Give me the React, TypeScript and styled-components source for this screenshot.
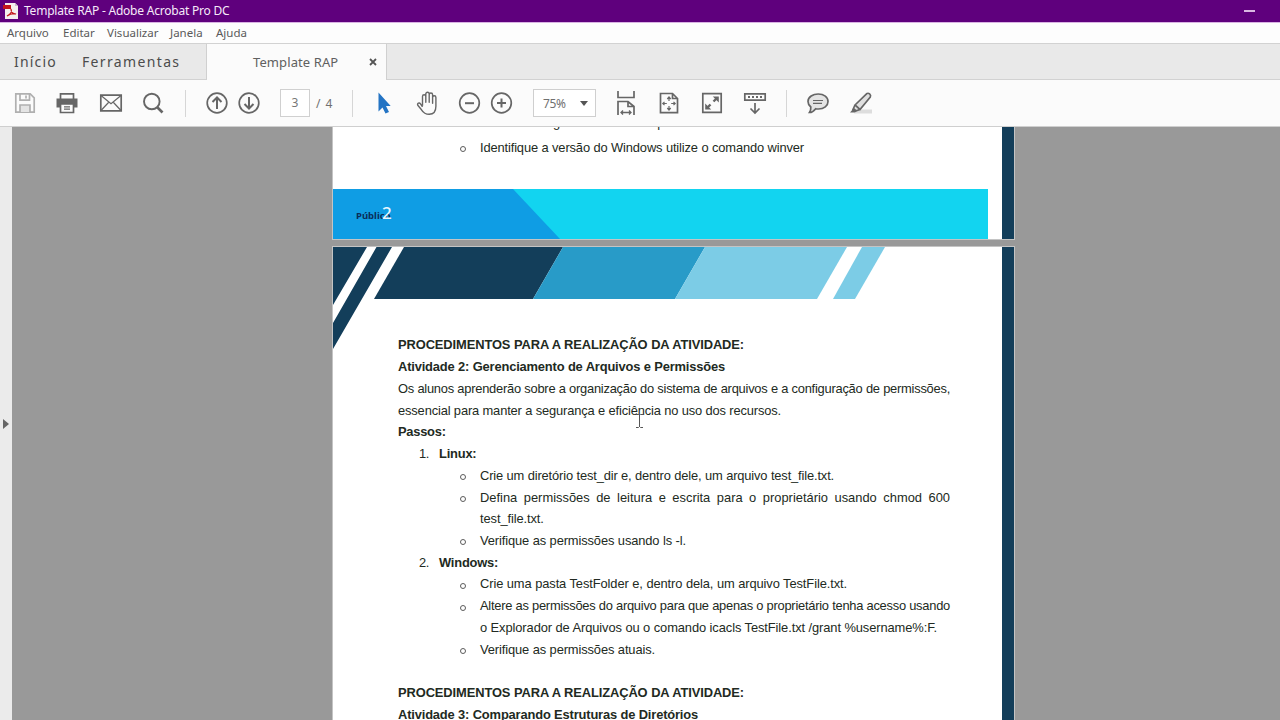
import React from 'react';
import styled, { createGlobalStyle } from 'styled-components';

const Global = createGlobalStyle`
  * { box-sizing: border-box; }
  body { margin: 0; overflow: hidden; background: #999; }
`;

const Window = styled.div`
  width: 1280px;
  height: 720px;
  display: flex;
  flex-direction: column;
  overflow: hidden;
  font-family: 'Noto Sans', 'Open Sans', sans-serif;
  color: #5a5a5a;
`;

const TitleBar = styled.header`
  height: 23px;
  flex: none;
  display: flex;
  align-items: center;
  padding: 0 25px 0 3px;
  background: #5f007d;
  border-bottom: 1px solid #d9b3e3;
  color: #f6eaf9;
`;

const Title = styled.span`
  margin-left: 4px;
  flex: 1;
  font-size: 12px;
  line-height: 20px;
  letter-spacing: -0.22px;
`;

const Minimize = styled.span`
  width: 11px;
  height: 2px;
  margin-bottom: 1px;
  background: #d9b8e2;
`;

const MenuBar = styled.nav`
  height: 20px;
  flex: none;
  display: flex;
  padding-left: 7px;
  background: #fdfdfd;
`;

const MenuItem = styled.span<{ $w: number }>`
  width: ${p => p.$w}px;
  font-size: 11.5px;
  line-height: 20px;
  white-space: nowrap;
`;

const TabBar = styled.div`
  height: 37px;
  flex: none;
  display: flex;
  background: #e9e9e9;
  border-top: 1px solid #d2d2d2;
`;

const HomeTabs = styled.div`
  width: 207px;
  display: flex;
  padding-left: 14px;
  border-right: 1px solid #d0d0d0;
  border-bottom: 1px solid #d2d2d2;
`;

const HomeTab = styled.span<{ $w: number; $ls: number }>`
  width: ${p => p.$w}px;
  font-size: 14px;
  line-height: 35px;
  letter-spacing: ${p => p.$ls}px;
  color: #4c4c4c;
`;

const ActiveTab = styled.div`
  width: 179px;
  display: flex;
  align-items: center;
  justify-content: space-between;
  padding: 0 8px 0 46px;
  background: #fbfbfb;
  font-size: 13px;
  letter-spacing: 0.1px;
  color: #606060;
`;

const TabRest = styled.div`
  flex: 1;
  border-left: 1px solid #d0d0d0;
  border-bottom: 1px solid #d2d2d2;
`;

const ToolBar = styled.div`
  height: 47px;
  flex: none;
  display: flex;
  align-items: center;
  background: #fbfbfb;
  border-bottom: 1px solid #cfcfcf;
  padding-left: 13px;
`;

const Tool = styled.span<{ $gap: number }>`
  width: 24px;
  height: 24px;
  flex: none;
  margin-right: ${p => p.$gap}px;
  svg { display: block; overflow: visible; }
`;

const Divider = styled.span<{ $gap: number }>`
  width: 1px;
  height: 27px;
  margin-right: ${p => p.$gap}px;
  background: #d6d6d6;
`;

const PageInput = styled.span`
  width: 30px;
  height: 28px;
  border: 1px solid #d0d0d0;
  background: #fff;
  text-align: center;
  font-size: 12px;
  line-height: 26px;
  color: #777;
`;

const PageTotal = styled.span`
  width: 42px;
  padding-left: 6px;
  font-size: 12px;
  word-spacing: 2px;
  white-space: nowrap;
  color: #707070;
`;

const ZoomBox = styled.span`
  width: 63px;
  height: 28px;
  margin-right: 18px;
  display: flex;
  align-items: center;
  justify-content: space-between;
  padding: 0 7px 0 9px;
  border: 1px solid #cfcfcf;
  background: #fff;
  font-size: 12px;
  letter-spacing: -0.4px;
  color: #707070;
`;

const Body = styled.div`
  flex: 1;
  min-height: 0;
  display: flex;
`;

const SidePanel = styled.aside`
  width: 12px;
  display: flex;
  align-items: center;
  padding-left: 2px;
  background: #ebebeb;
`;

const Viewer = styled.main`
  flex: 1;
  min-width: 0;
  overflow: hidden;
  padding-left: 320px;
  background: #999;
  font-family: 'Liberation Sans', Arial, sans-serif;
`;

const Sheet = styled.section<{ $h: number }>`
  position: relative;
  width: 683px;
  height: ${p => p.$h}px;
  margin-bottom: 6px;
  display: flex;
  overflow: hidden;
  background: #fff;
  border: 1px solid #c4c4c4;
`;

const FirstSheet = styled(Sheet)`
  border-top: 0;
`;

const SheetBody = styled.div`
  width: 669px;
  flex: none;
  display: flex;
  flex-direction: column;
`;

const Stripe = styled.div`
  width: 12px;
  background: #133e5a;
`;

const Cut = styled.div`
  height: 3px;
  margin-left: 147px;
  display: flex;
  align-items: flex-end;
  overflow: hidden;
`;

const CutWord = styled.span<{ $before: number }>`
  height: 13px;
  margin-left: ${p => p.$before}px;
  font-size: 12.9px;
  line-height: 11px;
  color: #222a22;
`;

const Text = styled.div<{ $w: number; $ls?: number; $bold?: boolean }>`
  height: 21.74px;
  width: ${p => p.$w}px;
  font-size: 12.9px;
  line-height: 21.74px;
  font-weight: ${p => (p.$bold ? 700 : 400)};
  letter-spacing: ${p => p.$ls || 0}px;
  text-align: justify;
  text-align-last: justify;
  white-space: nowrap;
  color: #222a22;
`;

const Row = styled.div<{ $pad: number }>`
  display: flex;
  align-items: center;
  height: 21.74px;
  padding-left: ${p => p.$pad}px;
`;

const Ring = styled.span`
  width: 6px;
  height: 6px;
  margin: 3px 14px 0 0;
  border: 1px solid #5c5c5c;
  border-radius: 50%;
`;

const Num = styled.span`
  width: 20px;
  font-size: 12.9px;
  line-height: 21.74px;
  letter-spacing: -0.5px;
  color: #222a22;
`;

const FootBand = styled.div`
  position: relative;
  width: 655px;
  height: 50px;
  margin-top: auto;
  svg { display: block; }
`;

const Label = styled.span`
  position: absolute;
  left: 23px;
  top: 20px;
  font: 700 9.5px/14px 'Noto Sans', sans-serif;
  color: #0a2d58;
`;

const PageNo = styled.span`
  position: absolute;
  left: 49px;
  top: 12px;
  font: 500 17px/24px 'Noto Sans', sans-serif;
  color: #e8f6ff;
`;

const Content = styled.div<{ $top: number }>`
  padding: ${p => p.$top}px 0 0 65px;
`;

const TextCursor = styled.div`
  position: absolute;
  left: 302px;
  top: 166px;
`;

const Banner = styled.div`
  height: 52px;
  svg { display: block; overflow: visible; }
`;

const Icon = ({ gap, children, color = '#666' }: { gap: number; children: React.ReactNode; color?: string }) => (
  <Tool $gap={gap}>
    <svg width="24" height="24" viewBox="0 0 24 24" fill="none" stroke={color} strokeWidth="1.7">{children}</svg>
  </Tool>
);

const Item = ({ w, ls = 0, bullet = true, children }: { w: number; ls?: number; bullet?: boolean; children: string }) => (
  <Row $pad={bullet ? 62 : 82}>
    {bullet && <Ring />}
    <Text $w={w} $ls={ls}>{children}</Text>
  </Row>
);

const Step = ({ n, w, children }: { n: string; w: number; children: string }) => (
  <Row $pad={21}>
    <Num>{n}</Num>
    <Text $w={w} $ls={-0.2} $bold>{children}</Text>
  </Row>
);

export default function App() {
  return (
    <Window>
      <Global />
      <TitleBar>
        <svg width="17" height="18" viewBox="0 0 17 18">
          <path d="M2 1h10l3 3v13H2z" fill="#f5eeee" />
          <path d="M0 3h8v4H0z" fill="#c4161c" />
          <path d="M12 1v3h3" fill="#c9b9cc" />
          <path d="M4 14c4-2 5-5 4-7 0 4 3 5 5 5-3-1-6 0-9 2z" fill="none" stroke="#c4161c" strokeWidth="1.2" />
        </svg>
        <Title>Template RAP - Adobe Acrobat Pro DC</Title>
        <Minimize />
      </TitleBar>
      <MenuBar>
        <MenuItem $w={56}>Arquivo</MenuItem>
        <MenuItem $w={44}>Editar</MenuItem>
        <MenuItem $w={63}>Visualizar</MenuItem>
        <MenuItem $w={46}>Janela</MenuItem>
        <MenuItem $w={40}>Ajuda</MenuItem>
      </MenuBar>
      <TabBar>
        <HomeTabs>
          <HomeTab $w={68} $ls={1.2}>Início</HomeTab>
          <HomeTab $w={110} $ls={1.35}>Ferramentas</HomeTab>
        </HomeTabs>
        <ActiveTab>
          <span>Template RAP</span>
          <svg width="10" height="10" viewBox="0 0 10 10" stroke="#555" strokeWidth="1.8"><path d="M2 2l6 6M8 2L2 8" /></svg>
        </ActiveTab>
        <TabRest />
      </TabBar>
      <ToolBar>
        <Icon gap={18} color="#b0b0b0">
          <path d="M2.8 2.8h14.4l4 4v14.400H2.8z" />
          <path d="M7 3v6.200h9.500V3M13 4.500v3" />
          <path d="M7 21v-7h10v7" fill="#e4e4e4" />
        </Icon>
        <Icon gap={20}>
          <path d="M5.500 8V2.800h13V8" />
          <path d="M1.500 7.500h21v9h-21z" fill="#666" stroke="none" />
          <path d="M5.500 13h13v8.500h-13z" fill="#fbfbfb" />
          <path d="M9 15.800h6M9 18.200h6" strokeWidth="1.200" />
        </Icon>
        <Icon gap={18}>
          <path d="M1.800 4.200h20.400v15.600H1.800z" />
          <path d="M2 4.500l10 8.300 10-8.300M2 19.500l7.500-8M22 19.500l-7.500-8" strokeWidth="1.200" />
        </Icon>
        <Icon gap={20}>
          <circle cx="10.800" cy="10.500" r="7.800" strokeWidth="1.900" />
          <path d="M16 16l5.500 5.500" strokeWidth="2.600" />
        </Icon>
        <Divider $gap={19} />
        <Icon gap={8}>
          <circle cx="12" cy="12" r="9.800" />
          <path d="M12 18V7M7.500 11L12 6.500l4.500 4.500" strokeWidth="2" />
        </Icon>
        <Icon gap={19}>
          <circle cx="12" cy="12" r="9.800" />
          <path d="M12 6v11M7.500 13l4.500 4.500 4.500-4.500" strokeWidth="2" />
        </Icon>
        <PageInput>3</PageInput>
        <PageTotal>/ 4</PageTotal>
        <Divider $gap={19} />
        <Icon gap={19} color="none">
          <path d="M6.500 1.500v19l4-4 3 6 3.500-1.600-3-5.900h4.700z" fill="#2474c4" />
        </Icon>
        <Icon gap={19}>
          <path d="M6 14.500V5.200c0-2.300 3.300-2.300 3.300 0V11 2.700c0-2.300 3.400-2.300 3.400 0V11 3.400c0-2.300 3.400-2.300 3.400 0V12 6.200c0-2.300 3.300-2.300 3.300 0V15c0 5.200-2.700 8-6.700 8-3.700 0-5.700-1.300-7.700-4.500L1.300 14c-1-2.200 1.600-3 2.700-1.500L6 15.500" transform="translate(1.500 .3)" strokeWidth="1.400" strokeLinejoin="round" />
        </Icon>
        <Icon gap={8}>
          <circle cx="11.500" cy="12" r="9.800" />
          <path d="M7 12.200h9" strokeWidth="2" />
        </Icon>
        <Icon gap={19}>
          <circle cx="11.500" cy="12" r="9.800" />
          <path d="M7 12h9M11.500 7.500v9" strokeWidth="2" />
        </Icon>
        <ZoomBox>
          75%
          <svg width="8" height="5" viewBox="0 0 8 5"><path d="M0 0h8L4 5z" fill="#555" /></svg>
        </ZoomBox>
        <Icon gap={19}>
          <path d="M4 0v6.500h16V0M4 24V10.500h10l6 5V24M14 10.500v5h6" />
          <path d="M7 21.500h10M9 19.500L7 21.500l2 2M15 19.500l2 2-2 2" strokeWidth="1.300" />
        </Icon>
        <Icon gap={19}>
          <path d="M3.500 2.500h12l5 5v14.200h-17zM15.500 2.500v5h5" />
          <path d="M12 6v4M12 15v4M5.800 12.500h4M14.200 12.500h4M10.300 8L12 6l1.700 2M10.300 17l1.700 2 1.700-2M7.500 10.800l-1.700 1.700 1.700 1.700M16.500 10.800l1.700 1.700-1.700 1.700" strokeWidth="1.200" />
        </Icon>
        <Icon gap={19}>
          <path d="M2.800 2.600h18.400v18.800H2.800z" />
          <path d="M13.500 10.500l3.500-3.500M10.500 13.500L7 17" strokeWidth="2.400" />
          <path d="M12.800 5.500h6v6zM5.200 12.500v6h6z" fill="#666" stroke="none" />
        </Icon>
        <Icon gap={19}>
          <path d="M1.800 2.800h20.400v6.400H1.800zM12 12v10M7.500 17.500L12 22l4.500-4.500" />
          <path d="M5 6h14" strokeWidth="2" strokeDasharray="2 2" />
        </Icon>
        <Divider $gap={19} />
        <Icon gap={19}>
          <path d="M12.200 3C18 3 22 6 22 10.500S18 18 12.500 18c-1 0-2 0-2.800-.3C8 20 6 21.500 3.500 21.500c1-1.500 1.500-3 1.300-5.500C3 14.500 2 12.700 2 10.500 2 6 7 3 12.200 3z" fill="#e4e4e4" />
          <path d="M7 9.500h10M7 12.300h9" strokeWidth="1.200" />
        </Icon>
        <Icon gap={0}>
          <path d="M8 18.500h15v4H5z" fill="#ddd" stroke="none" />
          <path d="M6 14L17.500 2.800c2-1.500 5 .7 3.800 3.200L11 18.500zM6 14l-2 4.500 2.500 1.500L11 18.500" fill="#e0e0e0" />
          <path d="M5 17l-4 4.500h5l2-2z" fill="#666" stroke="none" />
        </Icon>
      </ToolBar>
      <Body>
        <SidePanel>
          <svg width="8" height="12" viewBox="0 0 8 12"><path d="M1 1l6 5-6 5z" fill="#666" /></svg>
        </SidePanel>
        <Viewer>
          <FirstSheet $h={113}>
            <SheetBody>
              <Cut>
                <CutWord $before={73}>g</CutWord>
                <CutWord $before={97}>p</CutWord>
              </Cut>
              <Content $top={7}>
                <Item w={324} ls={-0.14}>Identifique a versão do Windows utilize o comando winver</Item>
              </Content>
              <FootBand>
                <svg width="655" height="50">
                  <path d="M0 0h655v50H0z" fill="#12d4f0" />
                  <path d="M0 0h180l47 50H0z" fill="#0f9de4" />
                </svg>
                <Label>Público</Label>
                <PageNo>2</PageNo>
              </FootBand>
            </SheetBody>
            <Stripe />
          </FirstSheet>
          <Sheet $h={600}>
            <SheetBody>
              <Banner>
                <svg width="669" height="52">
                  <path d="M0 0h34L0 58zM43.500 0H59L0 102V76z" fill="#133e5a" />
                  <path d="M71 0h159l-30 52H41z" fill="#133e5a" />
                  <path d="M230 0h142l-30 52H200z" fill="#289bc8" />
                  <path d="M372 0h142l-30 52H342z" fill="#7ccce6" />
                  <path d="M529 0h23l-30 52h-22z" fill="#7ccce6" />
                </svg>
              </Banner>
              <Content $top={35.4}>
                <Text $bold $w={346} $ls={-0.1}>PROCEDIMENTOS PARA A REALIZAÇÃO DA ATIVIDADE:</Text>
                <Text $bold $w={327} $ls={-0.17}>Atividade 2: Gerenciamento de Arquivos e Permissões</Text>
                <Text $w={552} $ls={-0.24}>Os alunos aprenderão sobre a organização do sistema de arquivos e a configuração de permissões,</Text>
                <Text $w={383} $ls={-0.15}>essencial para manter a segurança e eficiência no uso dos recursos.</Text>
                <Text $bold $w={48} $ls={-0.25}>Passos:</Text>
                <Step n="1." w={38}>Linux:</Step>
                <Item w={354} ls={-0.15}>Crie um diretório test_dir e, dentro dele, um arquivo test_file.txt.</Item>
                <Item w={470}>Defina permissões de leitura e escrita para o proprietário usando chmod 600</Item>
                <Item w={64} ls={-0.1} bullet={false}>test_file.txt.</Item>
                <Item w={206} ls={-0.12}>Verifique as permissões usando ls -l.</Item>
                <Step n="2." w={59}>Windows:</Step>
                <Item w={367} ls={-0.1}>Crie uma pasta TestFolder e, dentro dela, um arquivo TestFile.txt.</Item>
                <Item w={470} ls={-0.25}>Altere as permissões do arquivo para que apenas o proprietário tenha acesso usando</Item>
                <Item w={457} ls={-0.1} bullet={false}>o Explorador de Arquivos ou o comando icacls TestFile.txt /grant %username%:F.</Item>
                <Item w={175} ls={-0.12}>Verifique as permissões atuais.</Item>
                <Row $pad={0} />
                <Text $bold $w={346} $ls={-0.1}>PROCEDIMENTOS PARA A REALIZAÇÃO DA ATIVIDADE:</Text>
                <Text $bold $w={300} $ls={-0.16}>Atividade 3: Comparando Estruturas de Diretórios</Text>
              </Content>
            </SheetBody>
            <Stripe />
            <TextCursor>
              <svg width="9" height="16" viewBox="0 0 9 16" fill="none" stroke="#555"><path d="M1 1.500h2.500l1 1 1-1H8M4.500 2v12M1 14.500h2.500l1-1 1 1H8" /></svg>
            </TextCursor>
          </Sheet>
        </Viewer>
      </Body>
    </Window>
  );
}
